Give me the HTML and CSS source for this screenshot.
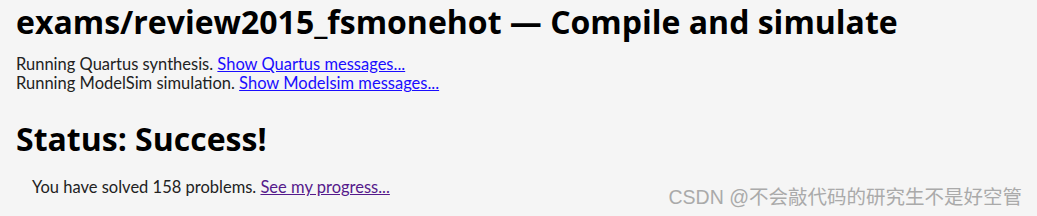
FILE: index.html
```html
<!DOCTYPE html>
<html lang="en">
<head>
    <meta charset="UTF-8">
    <title>exams/review2015_fsmonehot — Compile and simulate</title>
    <link rel="stylesheet" href="styles.css">
</head>
<body>
    <div class="page">
        <h1>exams/review2015_fsmonehot — Compile and simulate</h1>
        <div class="log">
            <div>Running Quartus synthesis. <a href="#">Show Quartus messages...</a></div>
            <div>Running ModelSim simulation. <a href="#">Show Modelsim messages...</a></div>
        </div>
        <h2>Status: Success!</h2>
        <div class="result">
            You have solved 158 problems. <a href="#" class="visited">See my progress...</a>
        </div>
    </div>
    <div class="watermark">CSDN @不会敲代码的研究生不是好空管</div>
</body>
</html>
```

FILE: styles.css
```css
* {
    margin: 0;
    padding: 0;
    box-sizing: border-box;
}

body {
    background: #f5f5f5;
    font-family: Lato, "Noto Sans", sans-serif;
    font-size: 16.5px;
    color: #222;
    height: 216px;
    overflow: hidden;
    position: relative;
}

.page {
    padding: 2px 16px;
}

h1, h2 {
    font-family: "Open Sans", sans-serif;
    font-weight: 700;
    font-size: 32px;
    color: #000;
    line-height: 40px;
}

.log {
    margin-top: 13px;
    line-height: 19px;
}

a {
    color: #1a0dff;
}

a.visited {
    color: #551a8b;
}

h2 {
    margin-top: 26px;
}

.result {
    margin-top: 18px;
    padding-left: 16px;
}

.watermark {
    position: absolute;
    right: 15px;
    bottom: 6px;
    font-family: "Liberation Sans", "Noto Sans CJK SC", sans-serif;
    font-size: 19.5px;
    color: #aaa;
}
```
